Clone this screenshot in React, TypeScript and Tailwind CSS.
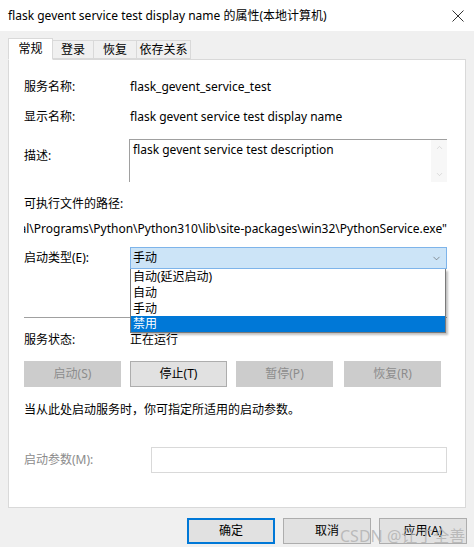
import { ChevronDown, ChevronUp } from 'lucide-react';

const font = "font-['Noto_Sans','Noto_Sans_CJK_SC',sans-serif]";

function Tab({ label, width, active }: { label: string; width: string; active?: boolean }) {
  if (active) {
    return (
      <div
        className={`${width} h-[22px] -mb-px bg-white border border-[#d9d9d9] border-b-white flex items-center justify-center relative z-10`}
      >
        {label}
      </div>
    );
  }
  return (
    <div className={`${width} h-[19px] bg-[#f0f0f0] border border-[#d9d9d9] border-l-0 flex items-center justify-center`}>
      {label}
    </div>
  );
}

function ActionButton({ label, disabled }: { label: string; disabled?: boolean }) {
  return (
    <div
      className={
        disabled
          ? 'w-[97px] h-[26px] bg-[#cccccc] text-[#8c8c8c] flex items-center justify-center'
          : 'w-[97px] h-[26px] bg-[#e1e1e1] border border-[#adadad] flex items-center justify-center'
      }
    >
      {label}
    </div>
  );
}

export default function App() {
  return (
    <div className={`w-[474px] h-[551px] bg-[#f0f0f0] text-[12px] leading-4 text-black flex flex-col relative overflow-hidden ${font}`}>
      {/* title bar */}
      <div className="h-[31px] shrink-0 bg-white flex items-center justify-between pl-2 pr-[10px]">
        <span className="text-[12px]">flask gevent service test display name 的属性(本地计算机)</span>
        <svg width="12" height="12" viewBox="0 0 12 12" className="text-[#333]">
          <path d="M0.5 0.5 L11.5 11.5 M11.5 0.5 L0.5 11.5" stroke="currentColor" strokeWidth="1" />
        </svg>
      </div>

      <div className="px-2 pt-[6px]">
        <div className="flex items-end h-[22px]">
          <Tab label="常规" width="w-[45px]" active />
          <Tab label="登录" width="w-[41px]" />
          <Tab label="恢复" width="w-[43px]" />
          <Tab label="依存关系" width="w-[54px]" />
        </div>

        <div className="h-[449px] bg-white border border-[#d9d9d9] pl-[15px] pr-[18px] flex flex-col">
          <div className="flex mt-[19px]">
            <span className="w-[106px]">服务名称:</span>
            <span>flask_gevent_service_test</span>
          </div>
          <div className="flex mt-[14px]">
            <span className="w-[106px]">显示名称:</span>
            <span>flask gevent service test display name</span>
          </div>
          <div className="flex items-start mt-[14px]">
            <span className="w-[105px] mt-[9px]">描述:</span>
            <div className="flex-1 h-[43px] border-t border-l border-[#a0a0a0] flex">
              <div className="flex-1 pl-[3px] pt-[2px]">flask gevent service test description</div>
              <div className="w-[16px] bg-[#f7f7f7] flex flex-col items-center justify-between py-[3px] text-[#c4c4c4]">
                <ChevronUp size={9} strokeWidth={1.5} />
                <ChevronDown size={9} strokeWidth={1.5} />
              </div>
            </div>
          </div>
          <div className="mt-[14px]">可执行文件的路径:</div>
          <div className="mt-[9px] flex justify-end overflow-hidden whitespace-nowrap">
            "C:\Users\Administrator\AppData\Local\Programs\Python\Python310\lib\site-packages\win32\PythonService.exe"
          </div>

          <div className="flex items-center mt-[10px]">
            <span className="w-[106px]">启动类型(E):</span>
            <div className="flex-1 relative">
              <div className="h-[22px] bg-[#cce4f7] border border-[#7eb4ea] flex items-center justify-between pl-[2px] pr-[4px]">
                <span>手动</span>
                <ChevronDown size={11} strokeWidth={1.3} className="text-[#555]" />
              </div>
              <div className="absolute left-0 top-full w-[316px] bg-white border border-t-0 border-[#7a7a7a] shadow-[2px_2px_2px_rgba(0,0,0,0.25)] z-20">
                <div className="h-[16px] pl-[2px] flex items-center">自动(延迟启动)</div>
                <div className="h-[16px] pl-[2px] flex items-center">自动</div>
                <div className="h-[15px] pl-[2px] flex items-center">手动</div>
                <div className="h-[16px] pl-[2px] flex items-center bg-[#0078d7] text-white">禁用</div>
              </div>
            </div>
          </div>

          <div className="mt-[48px] h-px bg-[#a0a0a0]" />

          <div className="flex mt-[14px]">
            <span className="w-[106px]">服务状态:</span>
            <span>正在运行</span>
          </div>

          <div className="flex gap-[9px] mt-[13px]">
            <ActionButton label="启动(S)" disabled />
            <ActionButton label="停止(T)" />
            <ActionButton label="暂停(P)" disabled />
            <div className="ml-[2px]">
              <ActionButton label="恢复(R)" disabled />
            </div>
          </div>

          <div className="mt-[15px]">当从此处启动服务时，你可指定所适用的启动参数。</div>

          <div className="flex items-center mt-[29px]">
            <span className="w-[127px] text-[#8c8c8c]">启动参数(M):</span>
            <div className="flex-1 h-[26px] border border-[#d9d9d9]" />
          </div>
        </div>
      </div>

      <div className="flex justify-end gap-[8px] pr-[7px] mt-[10px]">
        <div className="w-[88px] h-[26px] bg-[#e1e1e1] border-2 border-[#0078d7] flex items-center justify-center">确定</div>
        <div className="w-[88px] h-[26px] bg-[#e1e1e1] border border-[#adadad] flex items-center justify-center">取消</div>
        <div className="w-[88px] h-[26px] bg-[#e1e1e1] border border-[#adadad] flex items-center justify-center">应用(A)</div>
      </div>

      <div className="absolute left-0 right-0 bottom-0 h-[4px] bg-white" />

      {/* watermark */}
      <div className="absolute left-[340px] top-[526px] text-[16px] leading-5 text-[#b0b0b0]/80 whitespace-nowrap">
        CSDN @让丁全善
      </div>
    </div>
  );
}
